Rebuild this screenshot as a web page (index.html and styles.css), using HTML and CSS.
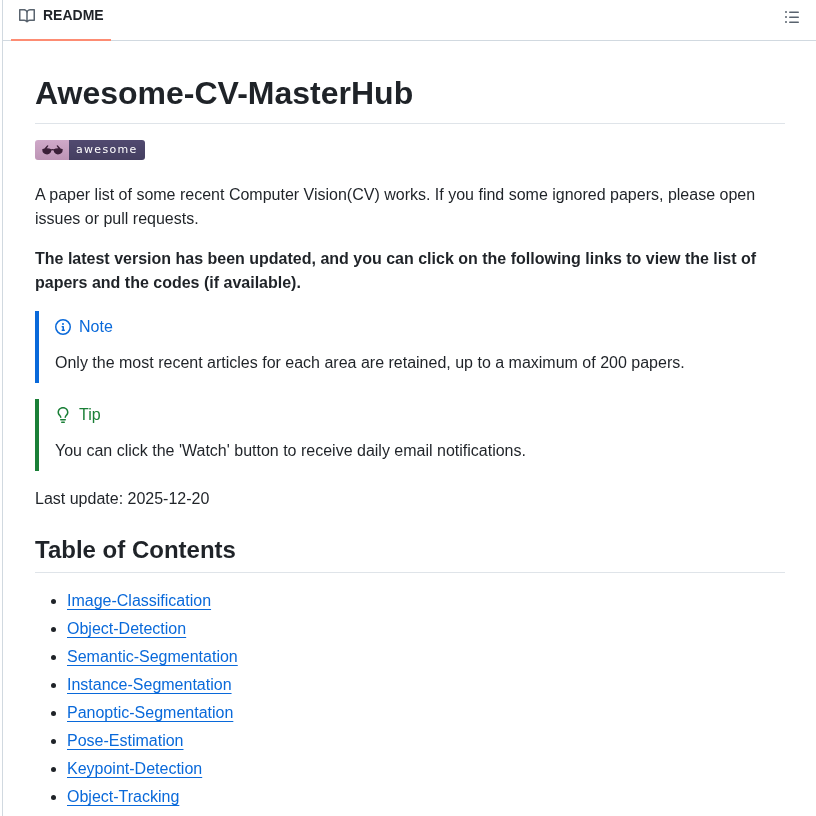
FILE: index.html
```html
<!DOCTYPE html>
<html lang="en">
<head>
  <meta charset="UTF-8">
  <title>Awesome-CV-MasterHub</title>
  <link rel="stylesheet" href="styles.css">
</head>
<body>

  <div class="readme-box">
    <div class="tab-bar">
      <div class="tab">
        <svg class="icon" viewBox="0 0 16 16" width="16" height="16"><path d="M0 1.75A.75.75 0 0 1 .75 1h4.253c1.227 0 2.317.59 3 1.501A3.743 3.743 0 0 1 11.006 1h4.245a.75.75 0 0 1 .75.75v10.5a.75.75 0 0 1-.75.75h-4.507a2.25 2.25 0 0 0-1.591.659l-.622.621a.75.75 0 0 1-1.06 0l-.622-.621A2.25 2.25 0 0 0 5.258 13H.75a.75.75 0 0 1-.75-.75Zm7.251 10.324.004-5.073-.002-2.253A2.25 2.25 0 0 0 5.003 2.5H1.5v9h3.757a3.75 3.75 0 0 1 1.994.574ZM8.755 4.75l-.004 7.322a3.752 3.752 0 0 1 1.992-.572H14.5v-9h-3.495a2.25 2.25 0 0 0-2.25 2.25Z"></path></svg>
        <span>README</span>
      </div>
      <svg class="icon outline-btn" viewBox="0 0 16 16" width="16" height="16"><path d="M5.75 2.5h8.5a.75.75 0 0 1 0 1.5h-8.5a.75.75 0 0 1 0-1.5Zm0 5h8.5a.75.75 0 0 1 0 1.5h-8.5a.75.75 0 0 1 0-1.5Zm0 5h8.5a.75.75 0 0 1 0 1.5h-8.5a.75.75 0 0 1 0-1.5ZM2 14a1 1 0 1 1 0-2 1 1 0 0 1 0 2Zm1-6a1 1 0 1 1-2 0 1 1 0 0 1 2 0ZM2 4a1 1 0 1 1 0-2 1 1 0 0 1 0 2Z"></path></svg>
    </div>

    <article class="markdown">
      <h1>Awesome-CV-MasterHub</h1>

      <div class="badge-line">
        <span class="badge">
          <span class="badge-left">
            <svg viewBox="0 0 22 10" width="21" height="10"><path d="M.2 4.2 L2.6 3.4 L5.6 0 L6.8 .6 L4.8 3.3 Q8 3.2 9.6 4.2 Q11 3.8 12.4 4.2 Q14 3.2 17.2 3.3 L15.2 .6 L16.4 0 L19.4 3.4 L21.8 4.2 Q21.6 9.6 16.6 9.6 Q13 9.6 12.2 5.6 Q11 5 9.8 5.6 Q9 9.6 5.4 9.6 Q.4 9.6 .2 4.2 Z"></path></svg>
          </span>
          <span class="badge-right">awesome</span>
        </span>
      </div>

      <p>A paper list of some recent Computer Vision(CV) works. If you find some ignored papers, please open issues or pull requests.</p>

      <p><strong>The latest version has been updated, and you can click on the following links to view the list of papers and the codes (if available).</strong></p>

      <div class="alert alert-note">
        <p class="alert-title">
          <svg viewBox="0 0 16 16" width="16" height="16"><path d="M0 8a8 8 0 1 1 16 0A8 8 0 0 1 0 8Zm8-6.5a6.5 6.5 0 1 0 0 13 6.5 6.5 0 0 0 0-13ZM6.5 7.75A.75.75 0 0 1 7.25 7h1a.75.75 0 0 1 .75.75v2.75h.25a.75.75 0 0 1 0 1.5h-2a.75.75 0 0 1 0-1.5h.25v-2h-.25a.75.75 0 0 1-.75-.75ZM8 6a1 1 0 1 1 0-2 1 1 0 0 1 0 2Z"></path></svg>
          Note
        </p>
        <p>Only the most recent articles for each area are retained, up to a maximum of 200 papers.</p>
      </div>

      <div class="alert alert-tip">
        <p class="alert-title">
          <svg viewBox="0 0 16 16" width="16" height="16"><path d="M8 1.5c-2.363 0-4 1.69-4 3.75 0 .984.424 1.625.984 2.304l.214.253c.223.264.47.556.673.848.284.411.537.896.621 1.49a.75.75 0 0 1-1.484.211c-.04-.282-.163-.547-.37-.847a8.456 8.456 0 0 0-.542-.68c-.084-.1-.173-.205-.268-.32C3.201 7.75 2.5 6.766 2.5 5.25 2.5 2.31 4.863 0 8 0s5.5 2.31 5.5 5.25c0 1.516-.701 2.5-1.328 3.259-.095.115-.184.22-.268.319-.207.245-.383.453-.541.681-.208.3-.33.565-.37.847a.751.751 0 0 1-1.485-.212c.084-.593.337-1.078.621-1.489.203-.292.45-.584.673-.848.075-.088.147-.173.213-.253.561-.679.985-1.32.985-2.304 0-2.06-1.637-3.75-4-3.75ZM5.75 12h4.5a.75.75 0 0 1 0 1.5h-4.5a.75.75 0 0 1 0-1.5ZM6 15.25a.75.75 0 0 1 .75-.75h2.5a.75.75 0 0 1 0 1.5h-2.5a.75.75 0 0 1-.75-.75Z"></path></svg>
          Tip
        </p>
        <p>You can click the 'Watch' button to receive daily email notifications.</p>
      </div>

      <p>Last update: 2025-12-20</p>

      <h2>Table of Contents</h2>

      <ul>
        <li><a href="#">Image-Classification</a></li>
        <li><a href="#">Object-Detection</a></li>
        <li><a href="#">Semantic-Segmentation</a></li>
        <li><a href="#">Instance-Segmentation</a></li>
        <li><a href="#">Panoptic-Segmentation</a></li>
        <li><a href="#">Pose-Estimation</a></li>
        <li><a href="#">Keypoint-Detection</a></li>
        <li><a href="#">Object-Tracking</a></li>
      </ul>
    </article>
  </div>

</body>
</html>
```

FILE: styles.css
```css
html, body {
  height: 816px;
  overflow: hidden;
}

body {
  margin: 0;
  background-color: #fff;
  color: #1f2328;
  font-family: "Liberation Sans", Arial, sans-serif;
  font-size: 16px;
  line-height: 1.5;
}

.readme-box {
  margin-left: 2px;
  border-left: 1px solid #d1d9e0;
  height: 816px;
  will-change: transform;
}

.tab-bar {
  display: flex;
  justify-content: space-between;
  align-items: flex-start;
  height: 40px;
  border-bottom: 1px solid #d1d9e0;
  padding: 0 16px 0 8px;
}

.tab {
  display: flex;
  align-items: center;
  gap: 8px;
  height: 31px;
  padding: 0 8px 8px;
  border-bottom: 2px solid #fd8c73;
  font-size: 14px;
  font-weight: bold;
  width: 84px;
}

.icon {
  fill: #59636e;
  flex-shrink: 0;
}

.outline-btn {
  margin-top: 9px;
}

.markdown {
  padding: 32px 31px 0 32px;
}

h1 {
  margin: 0 0 16px;
  padding-bottom: 9.6px;
  border-bottom: 1px solid #d1d9e0b3;
  font-size: 32px;
  line-height: 1.25;
}

h2 {
  margin: 24px 0 16px;
  padding-bottom: 7.2px;
  border-bottom: 1px solid #d1d9e0b3;
  font-size: 24px;
  line-height: 1.25;
}

p {
  margin: 0 0 16px;
}

.badge-line {
  height: 27.4px;
  margin-bottom: 16px;
}

.badge {
  display: flex;
  width: 110px;
  height: 20px;
  border-radius: 3px;
  overflow: hidden;
}

.badge-left {
  display: flex;
  align-items: center;
  justify-content: center;
  width: 34px;
  background: linear-gradient(#cfa9c9, #bd94b5);
}

.badge-left svg {
  fill: #3b1f38;
}

.badge-right {
  flex: 1;
  padding-left: 7px;
  background: linear-gradient(#514a70, #443e60);
  color: #fff;
  font-family: "DejaVu Sans", sans-serif;
  font-size: 11px;
  line-height: 19px;
  letter-spacing: 1.3px;
}

.alert {
  padding: 4px 16px 8px;
  margin-bottom: 16px;
  border-left: 4px solid;
}

.alert p {
  margin: 0;
}

.alert .alert-title {
  display: flex;
  align-items: center;
  gap: 8px;
  margin-bottom: 12px;
}

.alert-note {
  border-color: #0969da;
}

.alert-note .alert-title {
  color: #0969da;
  fill: #0969da;
}

.alert-tip {
  border-color: #1a7f37;
}

.alert-tip .alert-title {
  color: #1a7f37;
  fill: #1a7f37;
}

ul {
  margin: 0;
  padding-left: 32px;
}

li {
  margin-top: 4px;
}

li:first-child {
  margin-top: 0;
}

a {
  color: #0969da;
  text-decoration: underline;
  text-underline-offset: 3px;
}
```
